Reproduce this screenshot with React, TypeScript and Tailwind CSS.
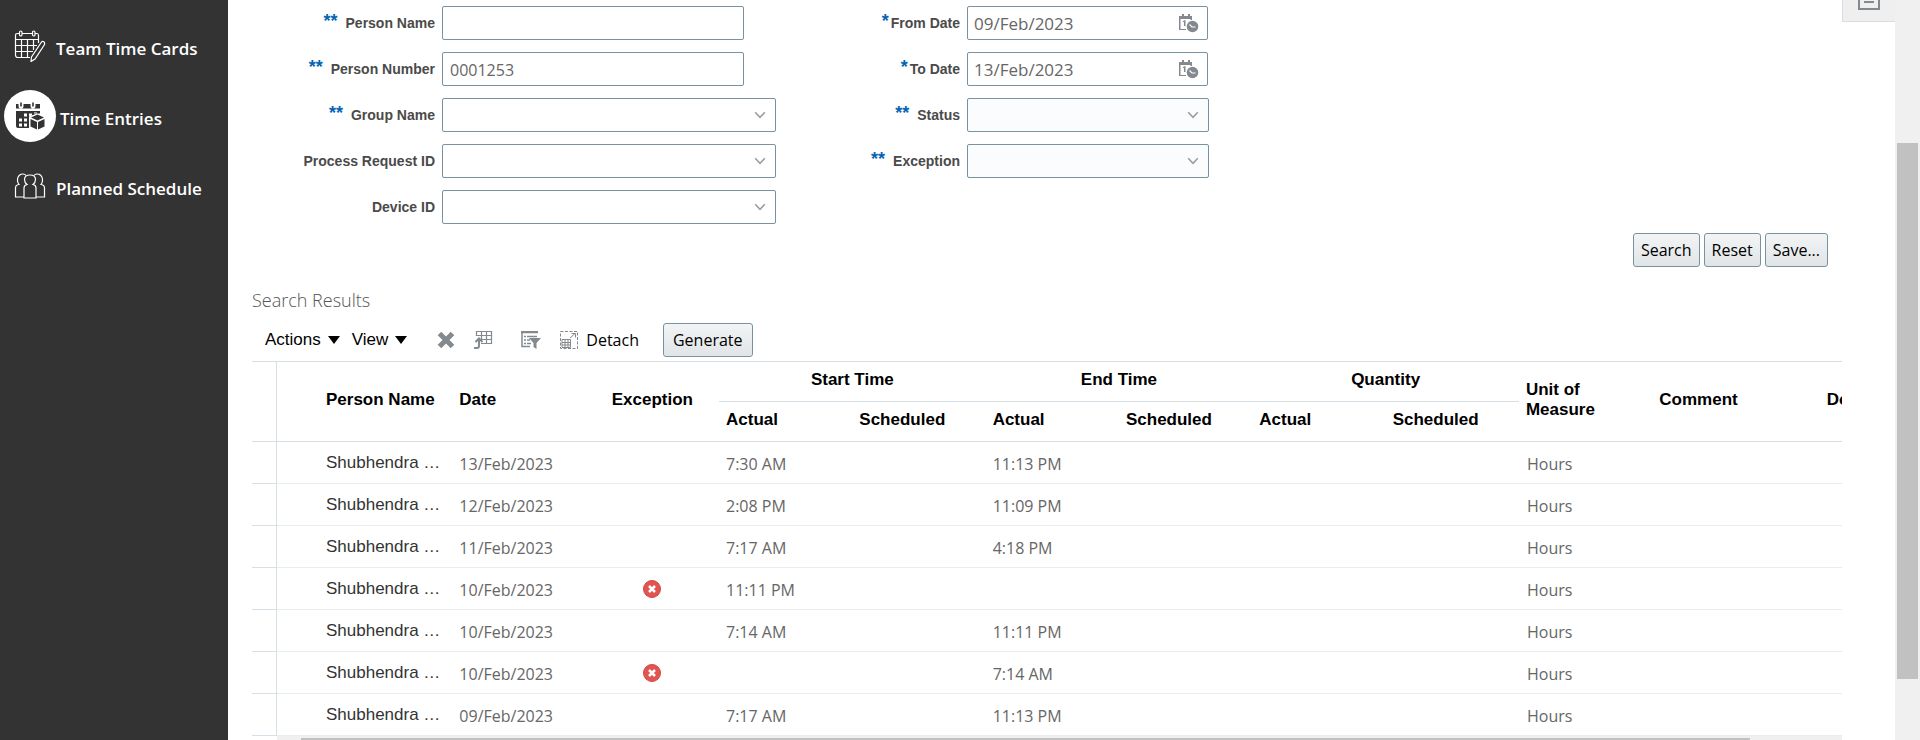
import type { ReactNode } from "react"

const navItems = [
  { label: "Team Time Cards", icon: <TeamCardsIcon /> },
  { label: "Time Entries", icon: <TimeEntriesIcon />, active: true },
  { label: "Planned Schedule", icon: <PeopleIcon /> },
]

const entries = [
  { date: "13/Feb/2023", start: "7:30 AM", end: "11:13 PM" },
  { date: "12/Feb/2023", start: "2:08 PM", end: "11:09 PM" },
  { date: "11/Feb/2023", start: "7:17 AM", end: "4:18 PM" },
  { date: "10/Feb/2023", start: "11:11 PM", end: "", exception: true },
  { date: "10/Feb/2023", start: "7:14 AM", end: "11:11 PM" },
  { date: "10/Feb/2023", start: "", end: "7:14 AM", exception: true },
  { date: "09/Feb/2023", start: "7:17 AM", end: "11:13 PM" },
]

function TeamCardsIcon() {
  return (
    <svg viewBox="0 0 32 32" className="w-8 h-8" fill="none" stroke="#fff" strokeWidth="1.2">
      <path d="M5 3.500H3.500Q1.500 3.500 1.500 5.500V25Q1.500 27.500 4 27.500H16M8 3.500H18.500M21 3.500H23Q24.500 3.500 24.500 5.500V13" />
      <rect x="5.500" y="1" width="2.500" height="5" rx="1.200" />
      <rect x="18.500" y="1" width="2.500" height="5" rx="1.200" />
      <path d="M1.500 9.500H24.500M1.500 15.500H23M1.500 21.500H19M7.500 9.500V27.500M13.500 9.500V27.500M19.500 9.500V20" />
      <path d="M27.500 12L17.500 27L17 31.500L21 29L30.500 14.500Q31 12.500 29.800 11.800Q28.500 11 27.500 12Z" fill="#333" />
    </svg>
  )
}

function TimeEntriesIcon() {
  return (
    <svg viewBox="0 0 32 32" className="w-8 h-8" fill="#333">
      <path d="M2 4H4.500V6Q4.500 8.500 7 8.500T9.500 6V4H16.500V6Q16.500 8.500 19 8.500T21.500 6V4H26V8.500H2Z" />
      <path d="M6.200 2.500H7.800V6.500H6.200ZM18.200 2.500H19.800V6.500H18.200Z" />
      <path d="M2 11H26V13.500H23L15 16.500V28H4Q2 28 2 26Z" />
      <path d="M5 18.500H8V21.500H5ZM10 18.500H13V21.500H10ZM5 23.500H8V26.500H5ZM10 23.500H13V26.500H10ZM10 13.500H13V16.500H10ZM15 13.500H18V15.500L15 16.500ZM20 12.500H23V13.500H20Z" fill="#fff" />
      <path d="M23.500 14.500L30 17.500L23.500 20.500L17 17.500Z" />
      <path d="M16.500 19L23 22V29.500L16.500 26.500ZM30.500 19L24 22V29.500L30.500 26.500Z" />
    </svg>
  )
}

function PeopleIcon() {
  return (
    <svg viewBox="0 0 32 32" className="w-8 h-8" fill="none" stroke="#fff" strokeWidth="1.2">
      <path d="M10 28V18Q10 15 13 14.500Q10.500 12.500 10.500 9.500Q10.500 5 16 5T21.500 9.500Q21.500 12.500 19 14.500Q22 15 22 18V28Z" />
      <path d="M10 27H1.500V18Q1.500 15 5 14.500Q3 12 3.500 9Q4.500 4 9 4Q11 4 12 5.500" />
      <path d="M22 27H30.500V18Q30.500 15 27 14.500Q29 12 28.500 9Q27.500 4 23 4Q21 4 20 5.500" />
    </svg>
  )
}

function DateIcon() {
  return (
    <svg viewBox="0 0 20 20" className="w-5 h-5" fill="#83898e">
      <path d="M0 3H3V1H5V3H9V1H11V3H13V7H11.500V6H1.500V16H7V17H0Z" />
      <path d="M4 8L6.500 7V13H5V9H4Z" />
      <circle cx="13.500" cy="13.500" r="5.800" />
      <path d="M10.500 11.500L13 14H16.500" fill="none" stroke="#fff" strokeWidth="1.200" />
    </svg>
  )
}

function Chevron() {
  return (
    <svg viewBox="0 0 14 10" className="w-3 h-2" fill="none" stroke="#9a9ea2" strokeWidth="2">
      <path d="M1 1.500L7 8L13 1.500" />
    </svg>
  )
}

function ErrorIcon() {
  return (
    <svg viewBox="0 0 18 18" className="w-[18px] h-[18px] inline-block" role="img" aria-label="Exception">
      <circle cx="9" cy="9" r="8.500" fill="#e2544f" stroke="#cf4a45" />
      <path d="M6 6L12 12M12 6L6 12" stroke="#fff" strokeWidth="2.500" />
    </svg>
  )
}

function Field({ id, label, marks, children }: { id: string; label: string; marks?: string; children: ReactNode }) {
  return (
    <div className="flex items-center h-[34px]">
      <label htmlFor={id} className="w-[208px] shrink-0 pr-[7px] flex justify-end items-center text-[14px] font-bold text-[#4a4a4a] whitespace-nowrap">
        {marks && (
          <span className={marks === "*" ? "text-[#0464b4] text-[18px] leading-5 pb-1 mr-[2px]" : "text-[#0464b4] text-[18px] leading-5 pb-1 mr-2"}>
            {marks}
          </span>
        )}
        {label}
      </label>
      {children}
    </div>
  )
}

function TextField({ id, value }: { id: string; value?: string }) {
  return (
    <input
      id={id}
      defaultValue={value}
      className="w-[302px] h-[34px] px-[7px] pt-[2px] border border-[#7a919f] rounded-xs bg-white font-['Open_Sans',sans-serif] text-[16px] text-[#666]"
    />
  )
}

function DateField({ id, value }: { id: string; value: string }) {
  return (
    <div className="flex items-center w-[241px] h-[34px] pr-2 border border-[#7a919f] rounded-xs bg-white">
      <input id={id} defaultValue={value} className="flex-1 min-w-0 px-[6px] pt-[2px] font-['Open_Sans',sans-serif] text-[17px] text-[#666]" />
      <button type="button" aria-label="Select date and time"><DateIcon /></button>
    </div>
  )
}

function SelectField({ id, wide }: { id: string; wide?: boolean }) {
  return (
    <div className={wide ? "grid items-center w-[334px] shrink-0" : "grid items-center w-[242px] shrink-0"}>
      <select
        id={id}
        className={
          wide
            ? "col-start-1 row-start-1 appearance-none h-[34px] border border-[#7a919f] rounded-xs bg-white"
            : "col-start-1 row-start-1 appearance-none h-[34px] border border-[#7a919f] rounded-xs bg-[#fbfcfe]"
        }
      >
        <option></option>
      </select>
      <span className="col-start-1 row-start-1 justify-self-end pr-[10px] pointer-events-none"><Chevron /></span>
    </div>
  )
}

function PushButton({ children }: { children: ReactNode }) {
  return (
    <button type="button" className="h-[34px] px-[7px] border border-[#7a919f] rounded-[3px] bg-linear-to-b from-[#f2f4f5] to-[#e1e5e8] font-['Open_Sans',sans-serif] text-[16px] text-black">
      {children}
    </button>
  )
}

function MenuButton({ label }: { label: string }) {
  return (
    <button type="button" className="flex items-center gap-[7px] text-[17px] text-black">
      {label}
      <svg viewBox="0 0 12 8" className="w-3 h-2"><path d="M0 0H12L6 8Z" /></svg>
    </button>
  )
}

function Sidebar() {
  return (
    <nav className="w-[228px] shrink-0 bg-[#333] pt-[11px] flex flex-col">
      {navItems.map((item) => (
        <a key={item.label} href="#" className="flex items-center h-[70px] pl-1 font-['Open_Sans',sans-serif] text-[17px] font-semibold text-white">
          <span className={item.active ? "w-[52px] h-[52px] mr-1 rounded-full bg-white flex items-center justify-center" : "w-[52px] pl-[10px]"}>
            {item.icon}
          </span>
          <span className="pt-[6px]">{item.label}</span>
        </a>
      ))}
    </nav>
  )
}

function Toolbar() {
  return (
    <div className="flex items-center h-[34px] pl-[13px]">
      <MenuButton label="Actions" />
      <div className="w-3" />
      <MenuButton label="View" />
      <button aria-label="Delete" className="ml-[30px]">
        <svg viewBox="0 0 18 18" className="w-[18px] h-[18px]"><path d="M2.500 2.500L15.500 15.500M15.500 2.500L2.500 15.500" stroke="#83898e" strokeWidth="5" /></svg>
      </button>
      <button aria-label="Export" className="ml-[18px]">
        <svg viewBox="0 0 20 20" className="w-5 h-5" fill="none" stroke="#83898e">
          <path d="M3 1.500H18.500M3 5.500H18.500M8 9.500H18.500M8 13.500H18.500M3.500 1V6M8.500 1V10M13.500 1V14M18.500 1V14" strokeWidth="1.200" />
          <path d="M1 18H4Q6 18 6 15.500V10M2.500 12L6 8.500L9.500 12" strokeWidth="2" />
        </svg>
      </button>
      <button aria-label="Query by example" className="ml-7">
        <svg viewBox="0 0 20 20" className="w-5 h-5" fill="none" stroke="#83898e">
          <path d="M0 2.500H17M1 2V16.500H9M3 6.500H5M6 6.500H16M3 10H5M6 10H9M3 13.500H5M6 13.500H10" strokeWidth="1.500" />
          <path d="M0 2H17" strokeWidth="2" />
          <path d="M8 8H20L15.500 13V19L12.500 17V13Z" fill="#83898e" stroke="none" />
        </svg>
      </button>
      <button className="ml-[18px] flex items-center gap-[7px] font-['Open_Sans',sans-serif] text-[16px] text-black">
        <svg viewBox="0 0 20 20" className="w-5 h-5" fill="none" stroke="#83898e">
          <rect x="1.500" y="1.500" width="17" height="17" strokeDasharray="3 1.500" />
          <path d="M3 9.500H11.500V17.500H3ZM3 12.500H11.500M3 15H11.500M6 10V17.500M9 10V17.500M11 8L16 3.500M12.500 3.500H16.500V7.500" />
        </svg>
        Detach
      </button>
      <div className="w-6" />
      <PushButton><span className="px-[2px]">Generate</span></PushButton>
    </div>
  )
}

function ResultsTable() {
  const th = "px-[7px] pb-[3px] text-left font-bold border-b border-[#d6dfe6]"
  const thCenter = "pb-[3px] text-center font-bold border-b border-[#d6dfe6]"
  return (
    <div className="border-t border-[#d6dfe6] overflow-hidden">
      <table className="table-fixed w-[1667px] border-separate border-spacing-0 text-[17px]">
        <colgroup>
          <col className="w-[25px]" />
          <col className="w-[42px]" />
          {Array.from({ length: 12 }, (_, i) => <col key={i} />)}
        </colgroup>
        <thead className="text-black leading-5">
          <tr className="h-10">
            <th rowSpan={2} className="border-b border-r border-[#d6dfe6]"></th>
            <th rowSpan={2} className="border-b border-[#d6dfe6]"></th>
            <th rowSpan={2} className={th}>Person Name</th>
            <th rowSpan={2} className={th}>Date</th>
            <th rowSpan={2} className={thCenter}>Exception</th>
            <th colSpan={2} className={thCenter}>Start Time</th>
            <th colSpan={2} className={thCenter}>End Time</th>
            <th colSpan={2} className={thCenter}>Quantity</th>
            <th rowSpan={2} className={th}>Unit of Measure</th>
            <th rowSpan={2} className={th}>Comment</th>
            <th rowSpan={2} className={thCenter}>Delete</th>
          </tr>
          <tr className="h-10">
            <th className={th}>Actual</th>
            <th className={th}>Scheduled</th>
            <th className={th}>Actual</th>
            <th className={th}>Scheduled</th>
            <th className={th}>Actual</th>
            <th className={th}>Scheduled</th>
          </tr>
        </thead>
        <tbody className="font-['Open_Sans',sans-serif] text-[16px] font-medium text-[#666] [&_td]:border-b [&_td]:border-[#ececec] [&_td:first-child]:border-[#d6dfe6]">
          {entries.map((row, i) => (
            <tr key={i} className="h-[42px]">
              <td className="border-r"></td>
              <td></td>
              <td className="pl-[7px] whitespace-nowrap font-['Liberation_Sans',sans-serif] font-normal text-[17px] text-[#333]">Shubhendra …</td>
              <td className="px-[7px] pt-[2px]">{row.date}</td>
              <td className="text-center leading-none">{row.exception && <ErrorIcon />}</td>
              <td className="px-[7px] pt-[2px]">{row.start}</td>
              <td></td>
              <td className="px-[7px] pt-[2px]">{row.end}</td>
              <td></td>
              <td></td>
              <td></td>
              <td className="px-2 pt-[2px]">Hours</td>
              <td></td>
              <td></td>
            </tr>
          ))}
        </tbody>
      </table>
    </div>
  )
}

export default function App() {
  return (
    <div className="flex h-screen overflow-hidden bg-white font-['Liberation_Sans',Arial,sans-serif]">
      <Sidebar />

      <main className="flex-1 min-w-0 pl-6 pr-[53px] relative">
        <button aria-label="Notes" className="absolute top-0 right-0 w-[53px] h-[22px] border-l border-b border-[#d6dfe6] bg-[#efefef] flex items-start justify-center">
          <svg viewBox="0 0 22 11" className="w-[22px] h-[11px]" fill="none" stroke="#83898e" strokeWidth="2">
            <path d="M1 0V9H21V0M6 2H16" />
          </svg>
        </button>

        <form className="pt-[6px] flex">
          <div className="-ml-[18px] w-[525px] flex flex-col gap-3">
            <Field id="person-name" label="Person Name" marks="**"><TextField id="person-name" /></Field>
            <Field id="person-number" label="Person Number" marks="**"><TextField id="person-number" value="0001253" /></Field>
            <Field id="group-name" label="Group Name" marks="**"><SelectField id="group-name" wide /></Field>
            <Field id="process-id" label="Process Request ID"><SelectField id="process-id" wide /></Field>
            <Field id="device-id" label="Device ID"><SelectField id="device-id" wide /></Field>
          </div>
          <div className="flex flex-col gap-3">
            <Field id="from-date" label="From Date" marks="*"><DateField id="from-date" value="09/Feb/2023" /></Field>
            <Field id="to-date" label="To Date" marks="*"><DateField id="to-date" value="13/Feb/2023" /></Field>
            <Field id="status" label="Status" marks="**"><SelectField id="status" /></Field>
            <Field id="exception" label="Exception" marks="**"><SelectField id="exception" /></Field>
          </div>
        </form>

        <div className="flex justify-end gap-1 pt-[9px] pr-[14px]">
          <PushButton>Search</PushButton>
          <PushButton>Reset</PushButton>
          <PushButton>Save...</PushButton>
        </div>

        <h2 className="pt-5 pb-[10px] leading-[26px] font-['Open_Sans',sans-serif] font-light text-[18px] text-[#555]">Search Results</h2>
        <Toolbar />
        <div className="h-1" />
        <ResultsTable />
        <div className="ml-[25px] h-[17px] bg-[#f0f0f0] pt-[2px] pl-6">
          <div className="h-[13px] w-[94%] bg-[#c1c1c1]" />
        </div>
      </main>

      <div className="w-[25px] shrink-0 bg-[#f0f0f0] px-[2px] pt-[143px]">
        <div className="h-[536px] bg-[#c1c1c1]" />
      </div>
    </div>
  )
}
